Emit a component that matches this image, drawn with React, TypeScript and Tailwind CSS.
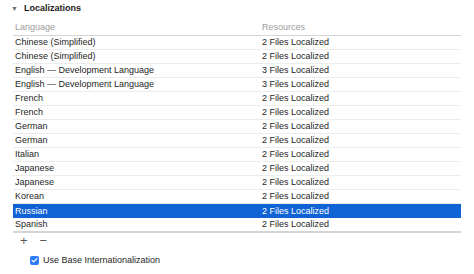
import { Check } from 'lucide-react'

const rows = [
  ['Chinese (Simplified)', '2 Files Localized'],
  ['Chinese (Simplified)', '2 Files Localized'],
  ['English — Development Language', '3 Files Localized'],
  ['English — Development Language', '3 Files Localized'],
  ['French', '2 Files Localized'],
  ['French', '2 Files Localized'],
  ['German', '2 Files Localized'],
  ['German', '2 Files Localized'],
  ['Italian', '2 Files Localized'],
  ['Japanese', '2 Files Localized'],
  ['Japanese', '2 Files Localized'],
  ['Korean', '2 Files Localized'],
  ['Russian', '2 Files Localized'],
  ['Spanish', '2 Files Localized'],
]

export default function App() {
  return (
    <div
      className="w-[474px] h-[274px] bg-white text-[9px] text-[#262626] overflow-hidden"
      style={{ fontFamily: '"Liberation Sans", Arial, sans-serif' }}
    >
      <div className="flex items-center h-[16px] pt-[1px] pl-[11px]">
        <span className="text-[#707070] text-[7px] leading-none mr-[6px]">▼</span>
        <span className="font-bold text-[#1a1a1a] text-[9px]">Localizations</span>
      </div>

      <div className="ml-[13px] w-[448px] mt-[6px]">
        <div className="flex h-[14px] items-end pb-[1px] border-b border-[#d6d6d6] text-[#9d9d9d]">
          <div className="w-[249px] pl-[2px]">Language</div>
          <div className="flex-1">Resources</div>
        </div>
        {rows.map(([lang, res], i) => {
          const sel = lang === 'Russian'
          return (
            <div
              key={i}
              className={
                sel
                  ? 'flex h-[14px] items-center bg-[#0f63d4] text-white'
                  : 'flex h-[14px] items-center border-b border-[#ececec]'
              }
            >
              <div className="w-[249px] pl-[2px] leading-none">{lang}</div>
              <div className="flex-1 leading-none">{res}</div>
            </div>
          )
        })}
        <div className="h-[2px] bg-[#d4d4d4] -mt-[1px]" />
        <div className="flex items-center h-[14px] pl-[7px] gap-[12px] text-[#5a5a5a] text-[13px] font-light leading-none">
          <span>+</span>
          <span>−</span>
        </div>
      </div>

      <div className="flex items-center mt-[7px] ml-[30px] gap-[4px]">
        <div className="w-[9px] h-[9px] rounded-[2px] bg-[#2f7cf6] flex items-center justify-center">
          <Check size={7} strokeWidth={4} color="white" />
        </div>
        <span className="text-[#262626]">Use Base Internationalization</span>
      </div>
    </div>
  )
}
